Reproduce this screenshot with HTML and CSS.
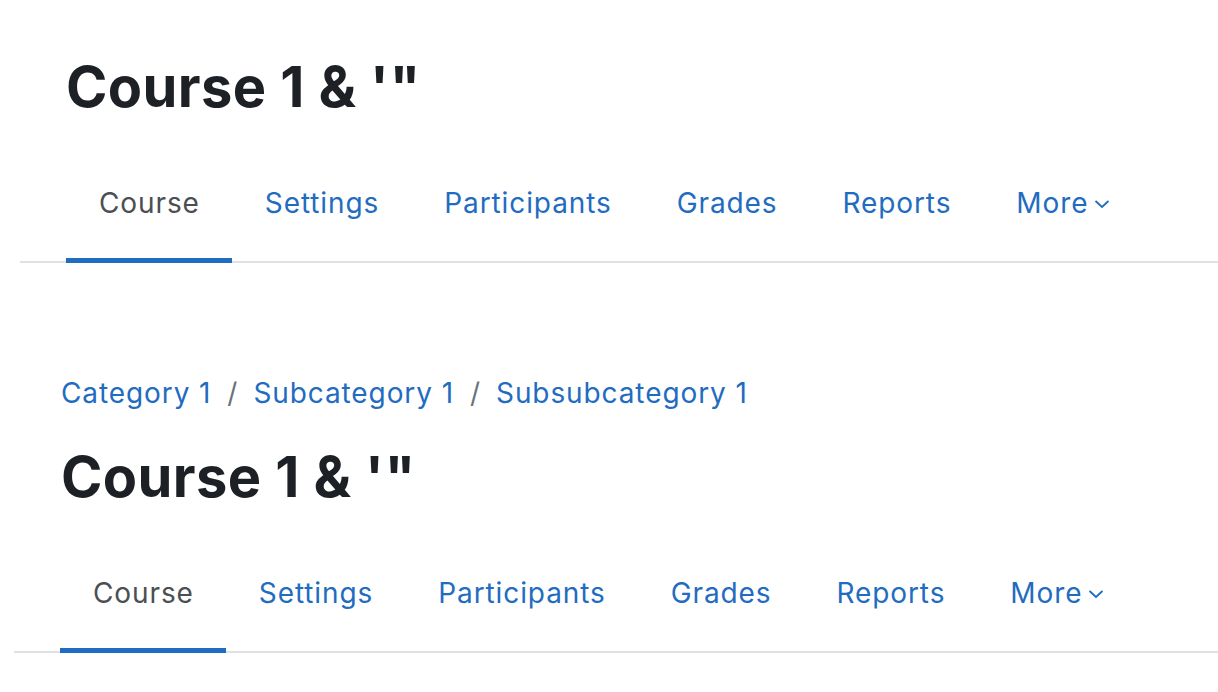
FILE: index.html
```html
<!DOCTYPE html>
<html lang="en">
<head>
	<meta charset="UTF-8">
	<title>Course 1</title>
	<link rel="stylesheet" href="styles.css">
</head>
<body>
	<!-- header without breadcrumb -->
	<div class="page page-one">
		<h1 class="title">Course 1 &amp; '"</h1>
		<ul class="tabs">
			<li><a href="#" class="act">Course</a></li>
			<li><a href="#">Settings</a></li>
			<li><a href="#">Participants</a></li>
			<li><a href="#">Grades</a></li>
			<li><a href="#">Reports</a></li>
			<li><a href="#" class="more">More
				<svg width="16" height="10" viewBox="0 0 16 10"><path d="M1.5 2 L8 8 L14.5 2" fill="none" stroke="currentColor" stroke-width="1.8"/></svg>
			</a></li>
		</ul>
	</div>
	<!-- header with breadcrumb -->
	<div class="page page-two">
		<ol class="crumbs">
			<li><a href="#">Category 1</a></li>
			<li class="sep">/</li>
			<li><a href="#">Subcategory 1</a></li>
			<li class="sep">/</li>
			<li><a href="#">Subsubcategory 1</a></li>
		</ol>
		<h1 class="title">Course 1 &amp; '"</h1>
		<ul class="tabs">
			<li><a href="#" class="act">Course</a></li>
			<li><a href="#">Settings</a></li>
			<li><a href="#">Participants</a></li>
			<li><a href="#">Grades</a></li>
			<li><a href="#">Reports</a></li>
			<li><a href="#" class="more">More
				<svg width="16" height="10" viewBox="0 0 16 10"><path d="M1.5 2 L8 8 L14.5 2" fill="none" stroke="currentColor" stroke-width="1.8"/></svg>
			</a></li>
		</ul>
	</div>
</body>
</html>
```
FILE: styles.css
```css
body{
	margin: 0;
	font-family: Inter, "Liberation Sans", sans-serif;
	color: #1d2125;
	background: #fff;
}
ul,ol{
	list-style: none;
	margin: 0;
	padding: 0;
}
a{
	text-decoration: none;
	color: #1f6cc0;
}
.page-one{
	padding: 54px 0 0 20px;
}
.page-one .title,
.page-one .tabs{
	padding-left: 46px;
}
.page-two{
	padding: 109px 0 0 14px;
}
.page-two .tabs{
	padding-left: 46px;
}
.page-two .crumbs{
	padding-left: 47px;
}
.page-two .title{
	padding-left: 47px;
	margin-top: 30px;
}
.title{
	margin: 0;
	font-size: 56px;
	line-height: 1.2;
	font-weight: 700;
	letter-spacing: 0.4px;
}
/* secondary navigation */
.tabs{
	display: flex;
	margin-top: 61px;
	border-bottom: 2px solid #dee2e6;
}
.tabs li{
	margin-bottom: -2px;
}
.tabs a{
	display: flex;
	align-items: center;
	padding: 0 32px 34px 33px;
	font-size: 28px;
	line-height: 42px;
	letter-spacing: 0.9px;
	border-bottom: 5px solid transparent;
}
.tabs .act{
	color: #4b4f53;
	border-bottom-color: #1f6cc0;
}
.tabs .more svg{
	margin-left: 6px;
	margin-top: 2px;
}
.crumbs{
	display: flex;
	font-size: 28px;
	line-height: 42px;
	letter-spacing: 0.9px;
}
.crumbs .sep{
	color: #6a737b;
	padding: 0 16px;
	letter-spacing: 0;
}
```
